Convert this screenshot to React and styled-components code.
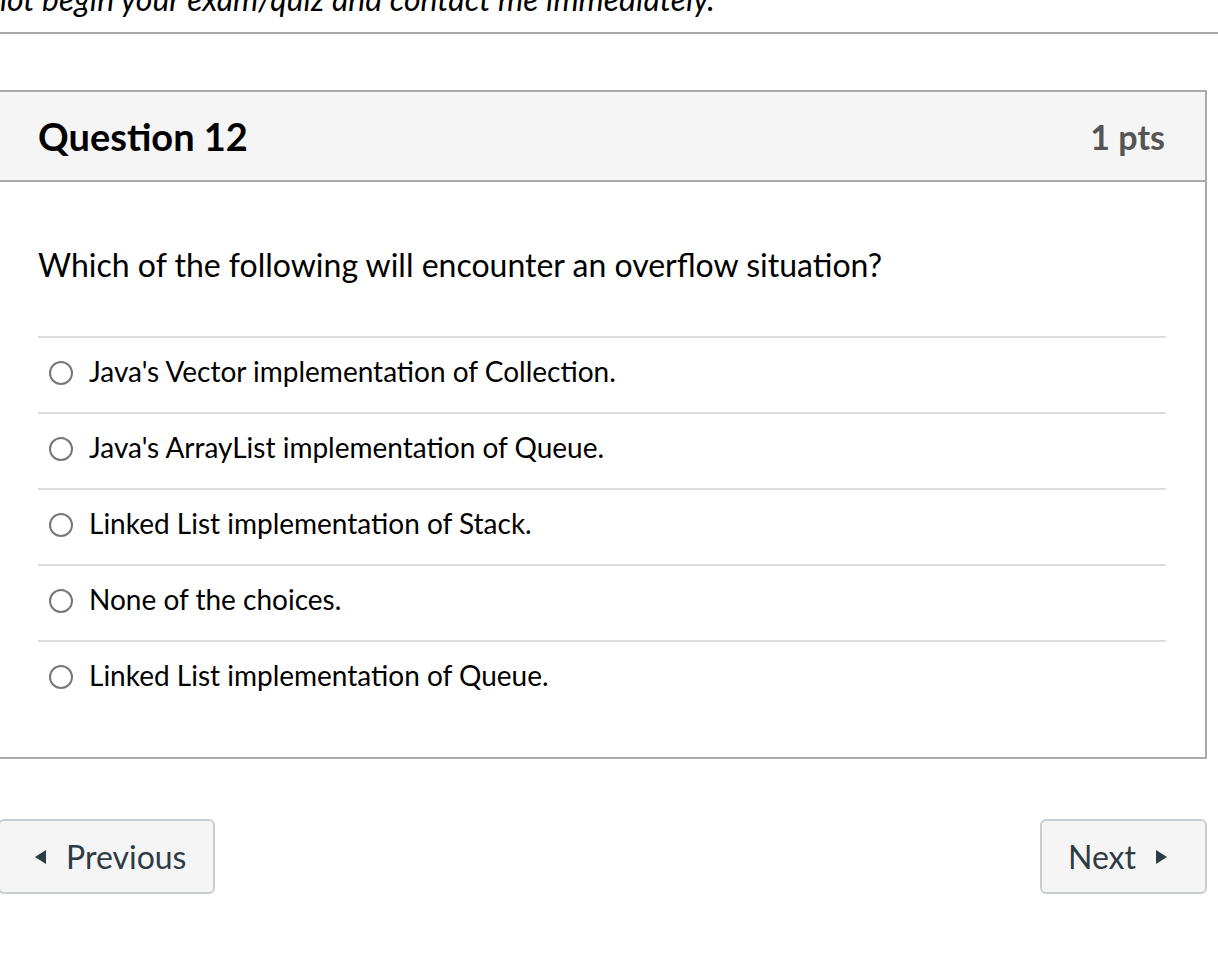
import React from 'react';
import styled, { createGlobalStyle } from 'styled-components';

const GlobalStyle = createGlobalStyle`
  html, body {
    margin: 0;
    padding: 0;
    background: #fff;
    overflow: hidden;
  }
  body {
    font-family: Lato, "Liberation Sans", sans-serif;
    color: #000;
  }
`;

const Page = styled.div`
  width: 1218px;
  height: 958px;
  overflow: hidden;
`;

const Notice = styled.p`
  margin: -21px 0 0 -10px;
  font-size: 32px;
  line-height: 40px;
  font-style: italic;
  white-space: nowrap;
`;

const Rule = styled.hr`
  margin: 13px 0 0;
  border: none;
  border-top: 2px solid #a8a8a8;
`;

const Column = styled.div`
  margin-left: -2px;
  width: 1209px;
`;

const Panel = styled.section`
  margin-top: 56px;
  border: 2px solid #aaaaaa;
`;

const Header = styled.header`
  display: flex;
  align-items: center;
  justify-content: space-between;
  height: 88px;
  padding: 0 40px 0 38px;
  background: #f5f5f5;
  border-bottom: 2px solid #aaaaaa;
`;

const Title = styled.h2`
  margin: 0;
  font-size: 38px;
  font-weight: 700;
  color: #000;
`;

const Points = styled.span`
  font-size: 34px;
  font-weight: 700;
  color: #555;
`;

const Body = styled.div`
  padding: 61px 39px 41px 38px;
`;

const Prompt = styled.p`
  margin: 0 0 49px 0;
  font-size: 32px;
  line-height: 44px;
`;

const Answers = styled.ul`
  margin: 0;
  padding: 0;
  list-style: none;
`;

const Answer = styled.li`
  box-sizing: border-box;
  display: flex;
  align-items: center;
  gap: 16px;
  height: 76px;
  padding: 0 0 8px 11px;
  border-top: 2px solid #dddddd;
  font-size: 28px;
`;

const Radio = styled.span`
  width: 20px;
  height: 20px;
  border: 2px solid #777;
  border-radius: 50%;
  flex-shrink: 0;
  margin-top: 3px;
`;

const Nav = styled.nav`
  display: flex;
  justify-content: space-between;
  margin-top: 60px;
`;

const NavButton = styled.button`
  display: flex;
  align-items: center;
  gap: 20px;
  height: 75px;
  padding: ${({ $dir }) => ($dir === 'prev' ? '0 27px 0 35px' : '0 38px 0 26px')};
  background: #f5f5f5;
  border: 2px solid #c7cdd1;
  border-radius: 6px;
  font-family: Lato, "Liberation Sans", sans-serif;
  font-size: 32px;
  color: #2d3b45;
  cursor: pointer;
`;

const Arrow = ({ dir }) => (
  <svg width="11" height="14" viewBox="0 0 11 14" aria-hidden="true">
    {dir === 'prev' ? (
      <polygon points="11,0 11,14 0,7" fill="#2d3b45" />
    ) : (
      <polygon points="0,0 0,14 11,7" fill="#2d3b45" />
    )}
  </svg>
);

const answers = [
  "Java's Vector implementation of Collection.",
  "Java's ArrayList implementation of Queue.",
  'Linked List implementation of Stack.',
  'None of the choices.',
  'Linked List implementation of Queue.',
];

const App = () => (
  <Page>
    <GlobalStyle />
    <Notice>not begin your exam/quiz and contact me immediately.</Notice>
    <Rule />
    <Column>
      <Panel>
        <Header>
          <Title>Question 12</Title>
          <Points>1 pts</Points>
        </Header>
        <Body>
          <Prompt>Which of the following will encounter an overflow situation?</Prompt>
          <Answers>
            {answers.map((text) => (
              <Answer key={text}>
                <Radio />
                {text}
              </Answer>
            ))}
          </Answers>
        </Body>
      </Panel>
      <Nav>
        <NavButton $dir="prev">
          <Arrow dir="prev" />
          Previous
        </NavButton>
        <NavButton $dir="next">
          Next
          <Arrow dir="next" />
        </NavButton>
      </Nav>
    </Column>
  </Page>
);

export default App;
